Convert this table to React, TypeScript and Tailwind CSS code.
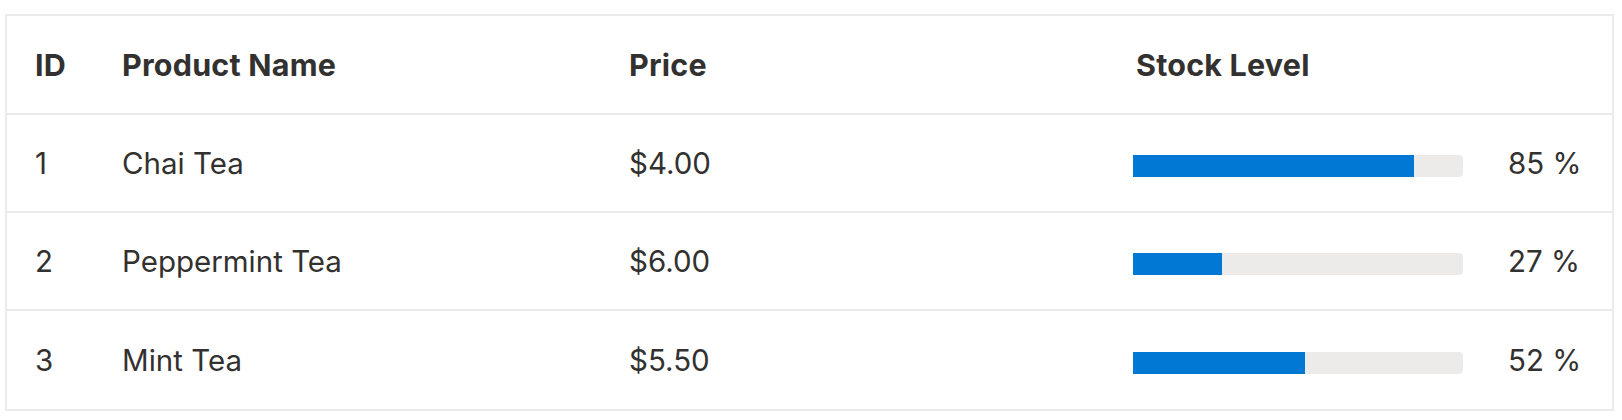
import React from "react";

const rows = [
  { id: 1, name: "Chai Tea", price: "$4.00", stock: 85 },
  { id: 2, name: "Peppermint Tea", price: "$6.00", stock: 27 },
  { id: 3, name: "Mint Tea", price: "$5.50", stock: 52 },
];

export default function App() {
  return (
    <div className="w-[1622px] h-[420px] bg-white pt-[14px] pl-[5px]" style={{ fontFamily: "Inter, 'Noto Sans', sans-serif" }}>
      <div className="w-[1609px] border-2 border-[#edebe9] text-[#323130] text-[29.5px]">
        <div className="grid grid-cols-[87px_507px_507px_1fr] h-[99px] items-center font-bold text-[30.5px] tracking-[0.2px] border-b-2 border-[#edebe9]">
          <div className="pl-[28px]">ID</div>
          <div className="pl-[28px]">Product Name</div>
          <div className="pl-[28px]">Price</div>
          <div className="pl-[28px]">Stock Level</div>
        </div>
        {rows.map((r, i) => (
          <div
            key={r.id}
            className={`grid grid-cols-[87px_507px_507px_1fr] h-[98px] items-center ${i < rows.length - 1 ? "border-b-2 border-[#edebe9]" : ""}`}
          >
            <div className="pl-[28px]">{r.id}</div>
            <div className="pl-[28px]">{r.name}</div>
            <div className="pl-[28px]">{r.price}</div>
            <div className="pl-[25px] flex items-center">
              <div className="w-[330px] h-[22px] mt-[5px] bg-[#edebe9] rounded-r-[4px] overflow-hidden">
                <div className="h-full bg-[#0078d4]" style={{ width: `${r.stock}%` }} />
              </div>
              <div className="ml-[45px]">{r.stock} %</div>
            </div>
          </div>
        ))}
      </div>
    </div>
  );
}
